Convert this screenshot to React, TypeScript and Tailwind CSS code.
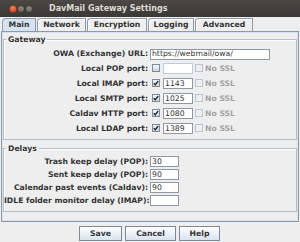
import React from 'react';

const font = { fontFamily: '"DejaVu Sans", Verdana, sans-serif' };

function Check({ checked, disabled }: { checked?: boolean; disabled?: boolean }) {
  return (
    <div
      className={`w-[8px] h-[8px] shrink-0 border flex items-center justify-center ${
        disabled
          ? 'border-[#b8c4d0] bg-[#eeeeee]'
          : 'border-[#7a8a99] bg-gradient-to-b from-[#f4f8fc] to-[#c6d6e6]'
      }`}
    >
      {checked && (
        <svg width="6" height="6" viewBox="0 0 6 6">
          <path d="M0.8 3.2 L2.3 4.8 L5.2 1" stroke="#222" strokeWidth="1.3" fill="none" />
        </svg>
      )}
    </div>
  );
}

function Field({ value, width, light }: { value?: string; width: string; light?: boolean }) {
  return (
    <div
      className={`${width} h-[11px] shrink-0 bg-white border pl-[1px] flex items-center leading-none text-[#333] font-normal ${
        light ? 'border-[#b8cfe5]' : 'border-[#8c9aa8]'
      }`}
    >
      {value}
    </div>
  );
}

function Label({ children }: { children: React.ReactNode }) {
  return <div className="w-[144px] shrink-0 text-right whitespace-nowrap text-[#333]">{children}</div>;
}

const ports = [
  { label: 'Local POP port:', value: '', checked: false },
  { label: 'Local IMAP port:', value: '1143', checked: true },
  { label: 'Local SMTP port:', value: '1025', checked: true },
  { label: 'Caldav HTTP port:', value: '1080', checked: true },
  { label: 'Local LDAP port:', value: '1389', checked: true },
];

const delays = [
  { label: 'Trash keep delay (POP):', value: '30' },
  { label: 'Sent keep delay (POP):', value: '90' },
  { label: 'Calendar past events (Caldav):', value: '90' },
  { label: 'IDLE folder monitor delay (IMAP):', value: '' },
];

const tabs = [
  { name: 'Main', w: 'w-[34px]' },
  { name: 'Network', w: 'w-[49px]' },
  { name: 'Encryption', w: 'w-[60px]' },
  { name: 'Logging', w: 'w-[46px]' },
  { name: 'Advanced', w: 'w-[58px]' },
];

export default function App() {
  return (
    <div
      className="w-[300px] h-[242px] bg-[#eeeeee] flex flex-col text-[7.7px] font-bold overflow-hidden"
      style={font}
    >
      {/* title bar */}
      <div className="h-[17px] shrink-0 bg-gradient-to-b from-[#4a4944] to-[#3a3935] flex items-center">
        <div className="flex items-center gap-[0px] pl-[9px]">
          <div className="w-[8px] h-[8px] rounded-full bg-gradient-to-b from-[#f78561] to-[#df4a20] border border-[#9c3a1c]" />
          <div className="w-[8px] h-[8px] rounded-full bg-gradient-to-b from-[#8e8b83] to-[#6a6862] border border-[#3a3935]" />
          <div className="w-[8px] h-[8px] rounded-full bg-gradient-to-b from-[#8e8b83] to-[#6a6862] border border-[#3a3935]" />
        </div>
        <div className="ml-[16px] text-[8px] text-[#dfdbd2] whitespace-nowrap">DavMail Gateway Settings</div>
      </div>

      {/* tabs */}
      <div className="h-[13px] shrink-0 mt-[1px] pl-[2px] flex items-end gap-[1px]">
        {tabs.map((t, i) => (
          <div
            key={t.name}
            className={`${t.w} h-[13px] border border-b-0 border-[#8c9aa8] rounded-tl-[4px] flex items-center justify-center text-[#333] ${
              i === 0 ? 'bg-[#d6e2ef]' : 'bg-[#eeeeee] shadow-[inset_1px_1px_0_#ffffff]'
            }`}
          >
            {t.name}
          </div>
        ))}
      </div>

      {/* tab panel */}
      <div className="h-[191px] shrink-0 mx-[1px] border border-[#8c9aa8] bg-[#d6e2ef] p-[1px]">
        <div className="h-full bg-[#eeeeee] px-[0px] flex flex-col">
          <fieldset className="mt-[2px] border border-[#b0bfcf] shadow-[inset_1px_1px_0_#fff] pb-[3px] mx-0">
            <legend className="ml-[2px] px-[2px] leading-[9px] text-[#333]">Gateway</legend>
            <div className="pt-[3px] flex flex-col">
              <div className="h-[14px] flex items-center gap-[2px]">
                <Label>OWA (Exchange) URL:</Label>
                <Field value="https://webmail/owa/" width="w-[120px]" />
              </div>
              {ports.map(p => (
                <div key={p.label} className="h-[15px] flex items-center">
                  <Label>{p.label}</Label>
                  <div className="ml-[4px] flex items-center">
                    <Check checked={p.checked} />
                    <div className="ml-[3px]">
                      <Field value={p.value} width="w-[30px]" light={!p.checked} />
                    </div>
                    <div className="ml-[2px] flex items-center gap-[2px]">
                      <Check disabled />
                      <span className="text-[#a3a3a3]">No SSL</span>
                    </div>
                  </div>
                </div>
              ))}
            </div>
          </fieldset>

          <fieldset className="mt-[4px] border border-[#b0bfcf] shadow-[inset_1px_1px_0_#fff] pb-[4px] mx-0">
            <legend className="ml-[2px] px-[2px] leading-[9px] text-[#333]">Delays</legend>
            <div className="pt-[2px] flex flex-col">
              {delays.map(d => (
                <div key={d.label} className="h-[13px] flex items-center gap-[2px]">
                  <Label>{d.label}</Label>
                  <Field value={d.value} width="w-[29px]" />
                </div>
              ))}
            </div>
          </fieldset>
        </div>
      </div>

      {/* buttons */}
      <div className="mt-[4px] flex justify-center gap-[3px] pr-[1px]">
        {['Save', 'Cancel', 'Help'].map((b, i) => (
          <div
            key={b}
            className={`h-[15px] border border-[#7a8a99] bg-gradient-to-b from-[#ffffff] to-[#d8e3ee] flex items-center justify-center text-[#333] ${
              i === 0 ? 'w-[43px]' : i === 1 ? 'w-[51px]' : 'w-[41px]'
            }`}
          >
            {b}
          </div>
        ))}
      </div>
    </div>
  );
}
